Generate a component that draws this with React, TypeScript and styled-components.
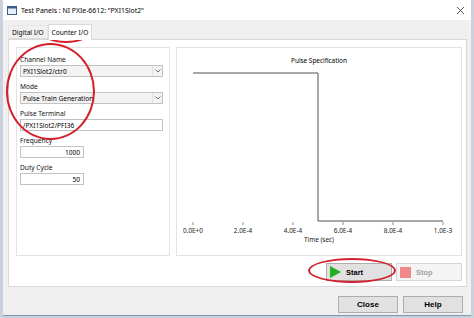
import styled, { createGlobalStyle } from "styled-components";

const GlobalStyle = createGlobalStyle`
  html, body {
    margin: 0;
    padding: 0;
    background: #c9d2dc;
  }
  * {
    box-sizing: border-box;
  }
`;

const Screen = styled.div`
  position: relative;
  width: 474px;
  height: 318px;
  overflow: hidden;
  background: #c9d2dc;
  font-family: "Noto Sans", "Open Sans", sans-serif;
  color: #000;
`;

const Window = styled.div`
  margin-left: 3px;
  width: 468px;
  height: 316px;
  display: flex;
  flex-direction: column;
  background: #f0f0f0;
  border-bottom: 1px solid #7d98b3;
`;

const TitleBar = styled.div`
  height: 20px;
  flex: none;
  display: flex;
  align-items: center;
  gap: 4px;
  padding: 0 6px 0 4px;
  background: #fff;
  font-size: 6.9px;
`;

const TitleText = styled.span`
  flex: 1;
  white-space: nowrap;
`;

const Body = styled.div`
  flex: 1;
  display: flex;
  flex-direction: column;
  padding: 4px 4px 0 5px;
`;

const TabStrip = styled.div`
  height: 15px;
  display: flex;
  align-items: flex-end;
  position: relative;
  z-index: 1;
`;

const Tab = styled.div<{ active?: boolean }>`
  height: ${(p) => (p.active ? "16px" : "14px")};
  margin-bottom: ${(p) => (p.active ? "-1px" : "0")};
  padding: 0 3px;
  display: flex;
  align-items: center;
  font-size: 6.6px;
  white-space: nowrap;
  background: ${(p) => (p.active ? "#fff" : "#f0f0f0")};
  border: 1px solid ${(p) => (p.active ? "#d9d9d9" : "#e6e6e6")};
  border-bottom: ${(p) => (p.active ? "none" : "1px solid #d9d9d9")};
`;

const TabPanel = styled.div`
  height: 248px;
  display: flex;
  flex-direction: column;
  padding: 7px 4px 5px 7px;
  background: #fff;
  border: 1px solid #d9d9d9;
`;

const ContentRow = styled.div`
  display: flex;
  gap: 6px;
  height: 209px;
`;

const GroupBox = styled.div`
  width: 154px;
  height: 100%;
  display: flex;
  flex-direction: column;
  gap: 5px;
  padding: 7px 6px 0 3px;
  border: 1px solid #e3e3e3;
`;

const Field = styled.div`
  display: flex;
  flex-direction: column;
  gap: 1px;
`;

const Label = styled.div`
  height: 9px;
  line-height: 9px;
  font-size: 6.6px;
  color: #111;
  white-space: nowrap;
`;

const Combo = styled.div`
  height: 12px;
  display: flex;
  align-items: center;
  background: #f3f3f3;
  border: 1px solid #c2c2c2;
  font-size: 6.6px;
`;

const ComboText = styled.span`
  flex: 1;
  padding-left: 2px;
  white-space: nowrap;
`;

const ComboArrow = styled.span`
  width: 10px;
  height: 100%;
  display: flex;
  align-items: center;
  justify-content: center;
  border-left: 1px solid #e2e2e2;
`;

const TextBox = styled.div<{ narrow?: boolean }>`
  height: 12px;
  width: ${(p) => (p.narrow ? "64px" : "100%")};
  display: flex;
  align-items: center;
  justify-content: ${(p) => (p.narrow ? "flex-end" : "flex-start")};
  padding: 0 3px 0 2px;
  background: #fff;
  border: 1px solid #bfc2c7;
  font-size: 6.6px;
  white-space: nowrap;
`;

const ChartBox = styled.div`
  flex: 1;
  height: 100%;
  display: flex;
  flex-direction: column;
  border: 1px solid #e3e3e3;
`;

const ChartTitle = styled.div`
  margin-top: 8px;
  height: 10px;
  line-height: 10px;
  text-align: center;
  font-size: 6.4px;
`;

const ActionRow = styled.div`
  margin-top: 7px;
  display: flex;
  justify-content: flex-end;
  gap: 4px;
`;

const ActionButton = styled.div<{ disabled?: boolean }>`
  width: 66px;
  height: 18px;
  display: flex;
  align-items: center;
  gap: 5px;
  padding-left: 3px;
  font-family: "Liberation Sans", Arial, sans-serif;
  font-weight: bold;
  font-size: 7.5px;
  color: ${(p) => (p.disabled ? "#a3a3a3" : "#000")};
  background: ${(p) => (p.disabled ? "#f4f4f4" : "#e1e1e1")};
  border: 1px solid ${(p) => (p.disabled ? "#d6d6d6" : "#adadad")};
`;

const StopSquare = styled.span`
  width: 11px;
  height: 11px;
  background: #f08a8a;
`;

const Footer = styled.div`
  flex: 1;
  display: flex;
  justify-content: flex-end;
  align-items: flex-start;
  gap: 5px;
  padding: 9px 4px 0 0;
`;

const DialogButton = styled.div`
  width: 60px;
  height: 17px;
  display: flex;
  align-items: center;
  justify-content: center;
  font-family: "Liberation Sans", Arial, sans-serif;
  font-weight: bold;
  font-size: 8px;
  background: #e1e1e1;
  border: 1px solid #adadad;
`;

const Annotation = styled.div<{ x: number; y: number; w: number; h: number }>`
  position: absolute;
  left: ${(p) => p.x}px;
  top: ${(p) => p.y}px;
  width: ${(p) => p.w}px;
  height: ${(p) => p.h}px;
  border: 2px solid #d3202c;
  border-radius: 50%;
  pointer-events: none;
`;

const ticks = ["0.0E+0", "2.0E-4", "4.0E-4", "6.0E-4", "8.0E-4", "1.0E-3"];

function WindowIcon() {
  return (
    <svg width="10" height="9" viewBox="0 0 10 9">
      <rect x="0.5" y="0.5" width="9" height="8" fill="#e6eef8" stroke="#3b5f8a" />
      <rect x="0.5" y="0.5" width="9" height="2" fill="#3b5f8a" />
    </svg>
  );
}

function CloseGlyph() {
  return (
    <svg width="9" height="9" viewBox="0 0 9 9">
      <path d="M1 1 L8 8 M8 1 L1 8" stroke="#444" strokeWidth="0.9" />
    </svg>
  );
}

function Chevron() {
  return (
    <svg width="6" height="4" viewBox="0 0 6 4">
      <path d="M0.5 0.5 L3 3 L5.5 0.5" fill="none" stroke="#555" strokeWidth="0.8" />
    </svg>
  );
}

function PlayIcon() {
  return (
    <svg width="11" height="12" viewBox="0 0 11 12">
      <path d="M0 0 L11 6 L0 12 Z" fill="#22b022" />
    </svg>
  );
}

function PulseChart() {
  return (
    <svg width="284" height="189" viewBox="0 0 284 189">
      <path d="M16 7 H141 V155 H266" fill="none" stroke="#505050" strokeWidth="1" />
      {ticks.map((t, i) => {
        const x = 16 + i * 50;
        return (
          <g key={t}>
            <line x1={x} y1="156" x2={x} y2="159" stroke="#777" strokeWidth="0.8" />
            <text
              x={x}
              y="167"
              textAnchor="middle"
              fontSize="6.4"
              fontFamily="Noto Sans, Open Sans, sans-serif"
              fill="#222"
            >
              {t}
            </text>
          </g>
        );
      })}
      <text
        x="142"
        y="176"
        textAnchor="middle"
        fontSize="6.4"
        fontFamily="Noto Sans, Open Sans, sans-serif"
        fill="#222"
      >
        Time (sec)
      </text>
    </svg>
  );
}

export default function App() {
  return (
    <Screen>
      <GlobalStyle />
      <Window>
        <TitleBar>
          <WindowIcon />
          <TitleText>Test Panels : NI PXIe-6612: "PXI1Slot2"</TitleText>
          <CloseGlyph />
        </TitleBar>
        <Body>
          <TabStrip>
            <Tab>Digital I/O</Tab>
            <Tab active>Counter I/O</Tab>
          </TabStrip>
          <TabPanel>
            <ContentRow>
              <GroupBox>
                <Field>
                  <Label>Channel Name</Label>
                  <Combo>
                    <ComboText>PXI1Slot2/ctr0</ComboText>
                    <ComboArrow>
                      <Chevron />
                    </ComboArrow>
                  </Combo>
                </Field>
                <Field>
                  <Label>Mode</Label>
                  <Combo>
                    <ComboText>Pulse Train Generation</ComboText>
                    <ComboArrow>
                      <Chevron />
                    </ComboArrow>
                  </Combo>
                </Field>
                <Field>
                  <Label>Pulse Terminal</Label>
                  <TextBox>/PXI1Slot2/PFI36</TextBox>
                </Field>
                <Field>
                  <Label>Frequency</Label>
                  <TextBox narrow>1000</TextBox>
                </Field>
                <Field>
                  <Label>Duty Cycle</Label>
                  <TextBox narrow>50</TextBox>
                </Field>
              </GroupBox>
              <ChartBox>
                <ChartTitle>Pulse Specification</ChartTitle>
                <PulseChart />
              </ChartBox>
            </ContentRow>
            <ActionRow>
              <ActionButton>
                <PlayIcon />
                Start
              </ActionButton>
              <ActionButton disabled>
                <StopSquare />
                Stop
              </ActionButton>
            </ActionRow>
          </TabPanel>
          <Footer>
            <DialogButton>Close</DialogButton>
            <DialogButton>Help</DialogButton>
          </Footer>
        </Body>
      </Window>
      <Annotation x={44} y={26} w={44} h={17} />
      <Annotation x={6} y={43} w={89} h={97} />
      <Annotation x={308} y={258} w={88} h={25} />
    </Screen>
  );
}
